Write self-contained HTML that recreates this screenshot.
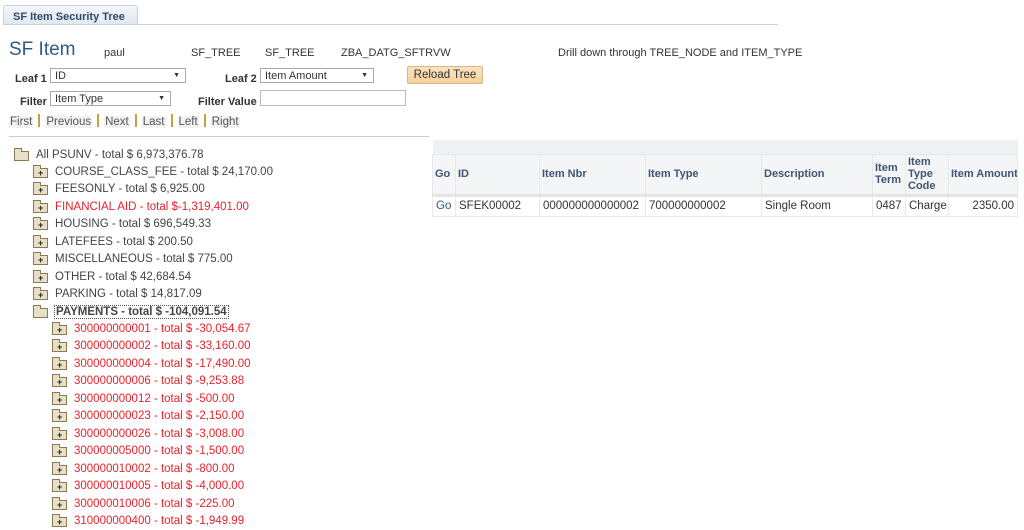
<!DOCTYPE html>
<html><head><style>
*{margin:0;padding:0;box-sizing:border-box}
body{width:1024px;height:530px;background:#fff;font-family:"Liberation Sans",Arial,sans-serif;font-size:11px;color:#333;position:relative;overflow:hidden}
.a{position:absolute;white-space:nowrap}
.tab{left:3px;top:5px;width:135px;height:20px;background:linear-gradient(#f4f7fa,#dfe7ef);border:1px solid #c6d3df;border-bottom:none;border-radius:3px 3px 0 0;font-weight:bold;color:#2d4a6b;font-size:11px;padding:5px 0 0 9px}
.tabline{left:3px;top:24px;width:775px;height:1px;background:#c6d3df}
.lbl{font-weight:bold;color:#333;font-size:11px}
.sel{height:15px;border:1px solid #aaa;background:#fff;font-size:11px;padding:0 4px;line-height:14px}
.sel:after{content:"▼";position:absolute;right:5px;top:0;font-size:7px}
.nav span{color:#555;background:#f2f2f2;padding:0 1px}
.nav i{display:inline-block;width:2px;height:13px;background:#c8a040;margin:0 5px;vertical-align:-2px}
.t{font-size:11.5px;color:#444}
.r{color:#e8222a}
.fold{position:absolute;width:15px;height:10px;border:1px solid #8a7a52;background:#e8e0c6}
.fold:before{content:"";position:absolute;left:-1px;top:-4px;width:6px;height:3px;border:1px solid #8a7a52;border-bottom:none;background:#e8e0c6}
.fold b{position:absolute;left:4px;top:0;font-size:9px;line-height:8px;color:#222;font-weight:bold}
table{position:absolute;left:432px;top:140px;width:585px;table-layout:fixed;border-collapse:collapse;font-size:11px}
td{border:1px solid #e8e8e8;padding:0 3px;white-space:nowrap;overflow:hidden}
.h td{font-weight:bold;color:#3f5573;background:#f4f5f6;height:41px;border-bottom:3px solid #e4e4e4;line-height:12px;white-space:normal;padding:0 2px}
.d td{height:21px;color:#333;font-size:11.5px}
</style></head><body>
<div class="a tab">SF Item Security Tree</div>
<div class="a tabline"></div>
<div class="a" style="left:9px;top:39px;font-size:19px;color:#2d5a8a">SF Item</div>
<div class="a" style="left:104px;top:47px;color:#333">paul</div>
<div class="a" style="left:191px;top:47px">SF_TREE</div>
<div class="a" style="left:265px;top:47px">SF_TREE</div>
<div class="a" style="left:341px;top:47px">ZBA_DATG_SFTRVW</div>
<div class="a" style="left:558px;top:47px">Drill down through TREE_NODE and ITEM_TYPE</div>
<div class="a lbl" style="left:15px;top:73px">Leaf 1</div>
<div class="a sel" style="left:50px;top:68px;width:136px">ID</div>
<div class="a lbl" style="left:225px;top:73px">Leaf 2</div>
<div class="a sel" style="left:260px;top:68px;width:114px">Item Amount</div>
<div class="a" style="left:407px;top:66px;width:76px;height:18px;background:linear-gradient(#fbe3bf,#f5d09c);border:1px solid #d8b88a;border-radius:2px;font-size:11.5px;text-align:center;line-height:16px">Reload Tree</div>
<div class="a lbl" style="left:20px;top:96px">Filter</div>
<div class="a sel" style="left:50px;top:91px;width:121px">Item Type</div>
<div class="a lbl" style="left:198px;top:96px">Filter Value</div>
<div class="a" style="left:260px;top:90px;width:146px;height:16px;border:1px solid #bbb"></div>
<div class="a nav" style="left:9px;top:114px;font-size:11.5px"><span>First</span><i></i><span>Previous</span><i></i><span>Next</span><i></i><span>Last</span><i></i><span>Left</span><i></i><span>Right</span></div>
<div class="a" style="left:9px;top:136px;width:420px;height:1px;background:#ccc"></div>

<div class="fold" style="left:14px;top:151px"></div><div class="a t" style="left:36px;top:149px">All PSUNV - total $ 6,973,376.78</div>
<div class="fold" style="left:33px;top:168px"><b>+</b></div><div class="a t" style="left:55px;top:166px">COURSE_CLASS_FEE - total $ 24,170.00</div>
<div class="fold" style="left:33px;top:185px"><b>+</b></div><div class="a t" style="left:55px;top:183px">FEESONLY - total $ 6,925.00</div>
<div class="fold" style="left:33px;top:203px"><b>+</b></div><div class="a t r" style="left:55px;top:201px">FINANCIAL AID - total $-1,319,401.00</div>
<div class="fold" style="left:33px;top:220px"><b>+</b></div><div class="a t" style="left:55px;top:218px">HOUSING - total $ 696,549.33</div>
<div class="fold" style="left:33px;top:238px"><b>+</b></div><div class="a t" style="left:55px;top:236px">LATEFEES - total $ 200.50</div>
<div class="fold" style="left:33px;top:255px"><b>+</b></div><div class="a t" style="left:55px;top:253px">MISCELLANEOUS - total $ 775.00</div>
<div class="fold" style="left:33px;top:273px"><b>+</b></div><div class="a t" style="left:55px;top:271px">OTHER - total $ 42,684.54</div>
<div class="fold" style="left:33px;top:290px"><b>+</b></div><div class="a t" style="left:55px;top:288px">PARKING - total $ 14,817.09</div>
<div class="fold" style="left:33px;top:308px"></div><div class="a t" style="left:54px;top:305px;font-weight:bold;border:1px dotted #555;padding:0 1px">PAYMENTS - total $ -104,091.54</div>

<div class="fold" style="left:52px;top:325px"><b>+</b></div><div class="a t r" style="left:74px;top:323px">300000000001 - total $ -30,054.67</div>
<div class="fold" style="left:52px;top:342px"><b>+</b></div><div class="a t r" style="left:74px;top:340px">300000000002 - total $ -33,160.00</div>
<div class="fold" style="left:52px;top:360px"><b>+</b></div><div class="a t r" style="left:74px;top:358px">300000000004 - total $ -17,490.00</div>
<div class="fold" style="left:52px;top:377px"><b>+</b></div><div class="a t r" style="left:74px;top:375px">300000000006 - total $ -9,253.88</div>
<div class="fold" style="left:52px;top:395px"><b>+</b></div><div class="a t r" style="left:74px;top:393px">300000000012 - total $ -500.00</div>
<div class="fold" style="left:52px;top:412px"><b>+</b></div><div class="a t r" style="left:74px;top:410px">300000000023 - total $ -2,150.00</div>
<div class="fold" style="left:52px;top:430px"><b>+</b></div><div class="a t r" style="left:74px;top:428px">300000000026 - total $ -3,008.00</div>
<div class="fold" style="left:52px;top:447px"><b>+</b></div><div class="a t r" style="left:74px;top:445px">300000005000 - total $ -1,500.00</div>
<div class="fold" style="left:52px;top:465px"><b>+</b></div><div class="a t r" style="left:74px;top:463px">300000010002 - total $ -800.00</div>
<div class="fold" style="left:52px;top:482px"><b>+</b></div><div class="a t r" style="left:74px;top:480px">300000010005 - total $ -4,000.00</div>
<div class="fold" style="left:52px;top:500px"><b>+</b></div><div class="a t r" style="left:74px;top:498px">300000010006 - total $ -225.00</div>
<div class="fold" style="left:52px;top:517px"><b>+</b></div><div class="a t r" style="left:74px;top:515px">310000000400 - total $ -1,949.99</div>

<table>
<colgroup><col style="width:23px"><col style="width:84px"><col style="width:106px"><col style="width:116px"><col style="width:111px"><col style="width:33px"><col style="width:43px"><col style="width:69px"></colgroup>
<tr><td colspan="8" style="height:14px;background:#eef1f3;border:none"></td></tr>
<tr class="h"><td>Go</td><td>ID</td><td>Item Nbr</td><td>Item Type</td><td>Description</td><td>Item Term</td><td>Item Type Code</td><td style="white-space:nowrap">Item Amount</td></tr>
<tr class="d"><td style="color:#2d5a8a">Go</td><td>SFEK00002</td><td>000000000000002</td><td>700000000002</td><td>Single Room</td><td>0487</td><td>Charge</td><td style="text-align:right">2350.00</td></tr>
</table>
</body></html>
